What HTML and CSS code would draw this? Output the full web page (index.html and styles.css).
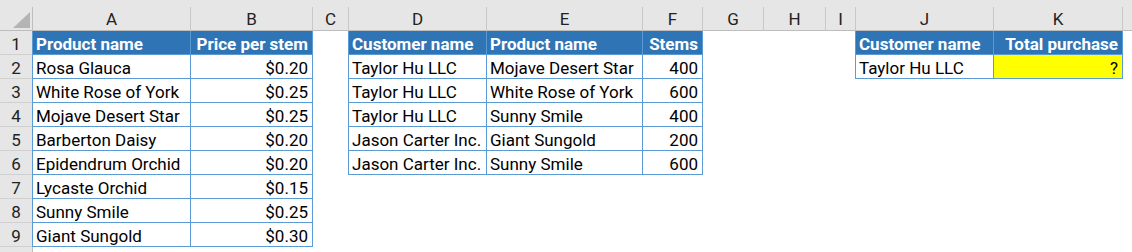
FILE: index.html
```html
<!DOCTYPE html>
<html>
<head>
<meta charset="utf-8">
<link rel="stylesheet" href="styles.css">
</head>
<body>
<div class="sheet">
  <div class="top"></div>
  <div class="row hdr">
    <div class="corner"><svg class="tri" width="17" height="16" viewBox="0 0 17 16"><polygon points="0,16 17,16 17,0" fill="#b4b4b4"/></svg></div>
    <div class="ch">A</div><div class="ch">B</div><div class="ch">C</div><div class="ch">D</div><div class="ch">E</div><div class="ch">F</div><div class="ch">G</div><div class="ch">H</div><div class="ch">I</div><div class="ch">J</div><div class="ch">K</div><div class="ch last"></div>
  </div>

  <div class="row">
    <div class="rh">1</div>
    <div class="c th tl ca">Product name</div><div class="c th cb r">Price per stem</div>
    <div class="c th tl cd">Customer name</div><div class="c th ce">Product name</div><div class="c th cf r">Stems</div>
    <div class="c th tl cj">Customer name</div><div class="c th ck r">Total purchase</div>
  </div>
  <div class="row">
    <div class="rh">2</div>
    <div class="c tl ca">Rosa Glauca</div><div class="c cb r">$0.20</div>
    <div class="c tl cd">Taylor Hu LLC</div><div class="c ce">Mojave Desert Star</div><div class="c cf r">400</div>
    <div class="c tl cj">Taylor Hu LLC</div><div class="c ck r yel">?</div>
  </div>
  <div class="row">
    <div class="rh">3</div>
    <div class="c tl ca">White Rose of York</div><div class="c cb r">$0.25</div>
    <div class="c tl cd">Taylor Hu LLC</div><div class="c ce">White Rose of York</div><div class="c cf r">600</div>
  </div>
  <div class="row">
    <div class="rh">4</div>
    <div class="c tl ca">Mojave Desert Star</div><div class="c cb r">$0.25</div>
    <div class="c tl cd">Taylor Hu LLC</div><div class="c ce">Sunny Smile</div><div class="c cf r">400</div>
  </div>
  <div class="row">
    <div class="rh">5</div>
    <div class="c tl ca">Barberton Daisy</div><div class="c cb r">$0.20</div>
    <div class="c tl cd">Jason Carter Inc.</div><div class="c ce">Giant Sungold</div><div class="c cf r">200</div>
  </div>
  <div class="row">
    <div class="rh">6</div>
    <div class="c tl ca">Epidendrum Orchid</div><div class="c cb r">$0.20</div>
    <div class="c tl cd">Jason Carter Inc.</div><div class="c ce">Sunny Smile</div><div class="c cf r">600</div>
  </div>
  <div class="row">
    <div class="rh">7</div>
    <div class="c tl ca">Lycaste Orchid</div><div class="c cb r">$0.15</div>
  </div>
  <div class="row">
    <div class="rh">8</div>
    <div class="c tl ca">Sunny Smile</div><div class="c cb r">$0.25</div>
  </div>
  <div class="row">
    <div class="rh">9</div>
    <div class="c tl ca">Giant Sungold</div><div class="c cb r">$0.30</div>
  </div>
  <div class="row">
    <div class="rh"></div>
  </div>
</div>
</body>
</html>
```

FILE: styles.css
```css
html, body {
  margin: 0;
  padding: 0;
  background: #ffffff;
}

.sheet {
  width: 1132px;
  height: 252px;
  overflow: hidden;
  font-family: Roboto, "Liberation Sans", sans-serif;
  font-size: 17px;
  color: #000;
}

.top {
  height: 7px;
  background: #e6e6e6;
}

.row {
  display: grid;
  grid-template-columns: 33px 158px 122px 36px 138px 156px 60px 61px 62px 30px 138px 129px 1fr;
  height: 24px;
}

.hdr {
  background: #e6e6e6;
}

.corner {
  box-sizing: border-box;
  height: 24px;
  border-right: 1px solid #bdbdbd;
  border-bottom: 1px solid #bdbdbd;
  display: flex;
  justify-content: flex-end;
  align-items: flex-end;
  padding: 0 2px 2px 0;
}

.tri {
  display: block;
}

.ch {
  box-sizing: border-box;
  height: 24px;
  border-right: 1px solid #c8c8c8;
  border-bottom: 1px solid #bdbdbd;
  text-align: center;
  line-height: 22px;
  padding-top: 1px;
  color: #222;
}

.ch.last {
  border-right: none;
}

.rh {
  grid-column: 1;
  box-sizing: border-box;
  height: 24px;
  background: #e6e6e6;
  border-right: 1px solid #bdbdbd;
  border-bottom: 1px solid #d0d0d0;
  text-align: center;
  line-height: 20px;
  padding-top: 3px;
  color: #222;
}

.c {
  box-sizing: border-box;
  height: 24px;
  border-right: 1px solid #5b9bd5;
  border-bottom: 1px solid #5b9bd5;
  line-height: 20px;
  padding: 3px 4px 0 3px;
  white-space: nowrap;
  overflow: hidden;
  grid-row: 1;
}

.tl {
  box-shadow: -1px 0 0 #5b9bd5;
}

.th {
  background: #2f75b5;
  color: #ffffff;
  font-weight: bold;
}

.r {
  text-align: right;
}

.yel {
  background: #ffff00;
}

.ca { grid-column: 2; }
.cb { grid-column: 3; }
.cd { grid-column: 5; }
.ce { grid-column: 6; }
.cf { grid-column: 7; }
.cj { grid-column: 11; }
.ck { grid-column: 12; }
```
